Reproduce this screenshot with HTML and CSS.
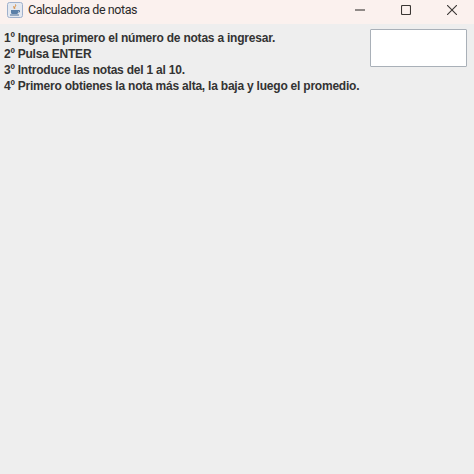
FILE: index.html
```html
<!DOCTYPE html>
<html lang="es">
<head>
<meta charset="utf-8">
<title>Calculadora de notas</title>
<link rel="stylesheet" href="styles.css">
</head>
<body>
<div class="window">
  <header class="titlebar">
    <svg class="app-icon" viewBox="0 0 16 16" width="16" height="16" aria-hidden="true">
      <rect x="0.5" y="0.5" width="15" height="15" rx="2" fill="#e4e8f0" stroke="#9fb0cc"/>
      <path d="M8.5 2.5c1 1.5-1.6 2.400-.6 4M6.800 4.200c-.6 1 .8 1.500.4 2.600" fill="none" stroke="#d9822b" stroke-width="1"/>
      <path d="M4 8h7v2.500c0 1-.8 1.500-1.500 1.500h-4C4.800 12 4 11.500 4 10.500z" fill="#5b7fa8"/>
      <path d="M3 13h9" stroke="#4a6d96" stroke-width="1"/>
      <path d="M11 8.500h1.500v1.500H11" fill="none" stroke="#5b7fa8"/>
    </svg>
    <span class="title">Calculadora de notas</span>
    <div class="controls">
      <span class="control"><svg viewBox="0 0 10 10" width="10" height="10" aria-hidden="true"><path d="M0 5h10" stroke="#3a3634" stroke-width="1.100"/></svg></span>
      <span class="control"><svg viewBox="0 0 10 10" width="10" height="10" aria-hidden="true"><rect x="0.500" y="0.500" width="9" height="9" rx="1" fill="none" stroke="#3a3634" stroke-width="1.100"/></svg></span>
      <span class="control"><svg viewBox="0 0 10 10" width="10" height="10" aria-hidden="true"><path d="M0 0l10 10M10 0L0 10" stroke="#3a3634" stroke-width="1.100"/></svg></span>
    </div>
  </header>
  <main class="content">
    <div class="instructions">
      <p>1º Ingresa primero el número de notas a ingresar.</p>
      <p>2º Pulsa ENTER</p>
      <p>3º Introduce las notas del 1 al 10.</p>
      <p>4º Primero obtienes la nota más alta, la baja y luego el promedio.</p>
    </div>
    <input class="field" type="text" aria-label="Número de notas">
  </main>
</div>
</body>
</html>
```
FILE: styles.css
```css
* { box-sizing: border-box; }
html, body { margin: 0; height: 100%; }
body { background: #eeeeee; }
.window {
  width: 474px;
  height: 474px;
  display: flex;
  flex-direction: column;
  overflow: hidden;
}
.titlebar {
  height: 24px;
  flex: none;
  background: #fbf1ee;
  display: flex;
  align-items: center;
  padding: 0 0 5px 7px;
  font-family: Roboto, "Noto Sans", sans-serif;
  font-size: 12.5px;
  letter-spacing: -0.42px;
  color: #2a2a2a;
}
.app-icon { flex: none; }
.title { margin-left: 5px; }
.controls { margin-left: auto; margin-right: -1px; display: flex; }
.control {
  width: 46px;
  height: 19px;
  display: flex;
  align-items: center;
  justify-content: center;
}
.content {
  flex: 1;
  display: flex;
  justify-content: space-between;
  align-items: flex-start;
  padding: 5px 7px 0 4px;
  background: #eeeeee;
}
.instructions {
  flex: none;
  width: 360px;
  padding-top: 1px;
  font-family: "Liberation Sans", Arial, sans-serif;
  font-weight: 700;
  font-size: 12px;
  letter-spacing: -0.22px;
  line-height: 16px;
  color: #333333;
  white-space: nowrap;
}
.instructions p { margin: 0; }
.field {
  width: 97px;
  height: 38px;
  background: #ffffff;
  border: 1px solid #a9b0b8;
  border-radius: 1px;
  padding: 0;
}
```
